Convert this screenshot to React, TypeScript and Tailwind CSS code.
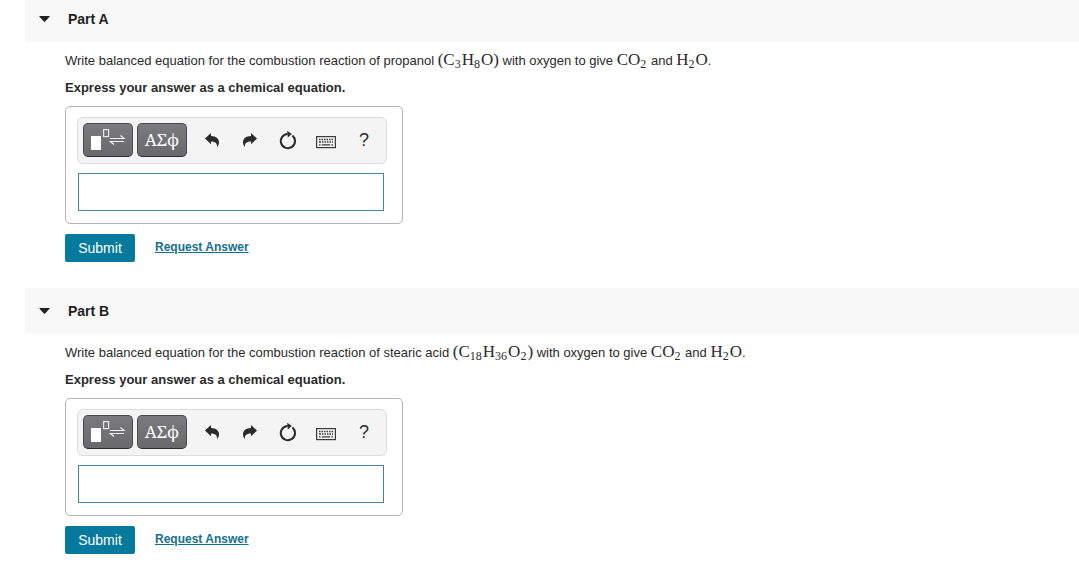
import * as React from "react";

type Piece = string | { formula: string };

type PartItem = {
  id: string;
  title: string;
  question: Piece[];
};

const PARTS: PartItem[] = [
  {
    id: "a",
    title: "Part A",
    question: [
      "Write balanced equation for the combustion reaction of propanol ",
      { formula: "(C3H8O)" },
      " with oxygen to give ",
      { formula: "CO2" },
      " and ",
      { formula: "H2O" },
      ".",
    ],
  },
  {
    id: "b",
    title: "Part B",
    question: [
      "Write balanced equation for the combustion reaction of stearic acid ",
      { formula: "(C18H36O2)" },
      " with oxygen to give ",
      { formula: "CO2" },
      " and ",
      { formula: "H2O" },
      ".",
    ],
  },
];

// Digits become subscripts, everything else stays on the line
function Formula({ value }: { value: string }) {
  return (
    <span className="font-['Liberation_Serif',serif] text-[17px] leading-none">
      {value.split(/(\d+)/).map((chunk, idx) =>
        /^\d+$/.test(chunk) ? (
          <sub key={idx} className="bottom-0 mr-px align-[-3px] text-[12px] leading-none">
            {chunk}
          </sub>
        ) : (
          <React.Fragment key={idx}>{chunk}</React.Fragment>
        )
      )}
    </span>
  );
}

function TemplatesIcon() {
  return (
    <svg width="36" height="24" viewBox="0 0 36 24" fill="none" aria-hidden="true">
      <rect x="1" y="8" width="10" height="14" fill="#fff" />
      <rect x="13.6" y="1.6" width="5" height="7" stroke="#e8e8ea" strokeWidth="1.2" />
      <path d="M20 10.5h14l-3.6-3M34 13.5H20.4l3.6 3" stroke="#f1f1f2" strokeWidth="1.2" />
    </svg>
  );
}

function UndoIcon() {
  return (
    <svg width="14" height="14" viewBox="0 0 14 14" fill="#2b2b2b" aria-hidden="true">
      <path d="M0 5.6 6 0v3c5 .1 8 2.6 8 6.4 0 1.8-.7 3.3-2 4.6.5-3.8-1.5-5.5-6-5.6v2.8z" />
    </svg>
  );
}

function RedoIcon() {
  return (
    <svg width="14" height="14" viewBox="0 0 14 14" fill="#2b2b2b" aria-hidden="true">
      <path d="M14 5.6 8 0v3C3 3.1 0 5.6 0 9.4c0 1.8.7 3.3 2 4.6-.5-3.8 1.5-5.5 6-5.6v2.8z" />
    </svg>
  );
}

function ResetIcon() {
  return (
    <svg width="18" height="20" viewBox="0 0 18 20" aria-hidden="true">
      <path
        d="M13.4 5.6A7.1 7.1 0 1 1 8.6 4"
        fill="none"
        stroke="#2b2b2b"
        strokeWidth="2"
      />
      <path d="M8.2 .8 12.8 4 8.8 7.4z" fill="#2b2b2b" />
    </svg>
  );
}

function KeyboardIcon() {
  return (
    <svg width="20" height="14" viewBox="0 0 20 14" fill="none" aria-hidden="true">
      <rect x=".6" y="1.6" width="18.8" height="11" stroke="#3a3a3a" strokeWidth="1.2" />
      <path
        d="M3 4.5h1.5m1 0H7m1 0h1.5m1 0H12m1 0h1.5m1 0H17M3 7h2m1 0h1.5m1 0H10m1 0h1.5m1 0H15m1 0h1"
        stroke="#3a3a3a"
        strokeWidth="1.3"
      />
      <path d="M3 9.8h1.6m1.2 0h8.4m1.2 0H17" stroke="#3a3a3a" strokeWidth="1.3" />
    </svg>
  );
}

const DARK_BUTTON =
  "flex h-[34px] w-[50px] shrink-0 items-center justify-center rounded-[5px] border border-[#4a4a4c] border-b-[#2c2c2e] bg-linear-to-b from-[#7b7b7e] to-[#69696d] text-white";

const TOOL_BUTTON = "flex h-[34px] w-[38px] shrink-0 items-center justify-center";

function Toolbar() {
  return (
    <div
      role="toolbar"
      aria-label="Equation tools"
      className="mr-1 flex h-[47px] items-center rounded-md border border-[#dcdcdc] bg-[#f4f4f4] pb-px pl-[5px]"
    >
      <button type="button" aria-label="Templates" className={DARK_BUTTON}>
        <TemplatesIcon />
      </button>
      <button
        type="button"
        aria-label="Greek symbols"
        className={`${DARK_BUTTON} ml-1 mr-[6px] font-['Noto_Serif','DejaVu_Serif','Liberation_Serif',serif] text-[17px]`}
      >
        ΑΣϕ
      </button>
      <button type="button" aria-label="Undo" className={TOOL_BUTTON}>
        <UndoIcon />
      </button>
      <button type="button" aria-label="Redo" className={TOOL_BUTTON}>
        <RedoIcon />
      </button>
      <button type="button" aria-label="Reset" className={TOOL_BUTTON}>
        <ResetIcon />
      </button>
      <button type="button" aria-label="Keyboard shortcuts" className={`${TOOL_BUTTON} pt-1`}>
        <KeyboardIcon />
      </button>
      <button type="button" aria-label="Help" className={`${TOOL_BUTTON} text-[18px] text-[#2b2b2b]`}>
        ?
      </button>
    </div>
  );
}

function Part({ item }: { item: PartItem }) {
  const [open, setOpen] = React.useState(true);
  const [answer, setAnswer] = React.useState("");

  return (
    <section className="group">
      <h2 className="bg-[#f8f8f8] py-3 group-first:pt-2">
        <button
          type="button"
          aria-expanded={open}
          onClick={() => setOpen(!open)}
          className="flex items-center gap-[18px] pl-[14px] text-[14px] leading-[22px] font-bold text-[#1f1f1f]"
        >
          <svg width="11" height="6" viewBox="0 0 11 6" fill="#1f1f1f" aria-hidden="true">
            <path d="M.8 0h9.4q.8 0 .3.7L6.1 5.6q-.6.6-1.2 0L.5.7Q0 0 .8 0z" />
          </svg>
          {item.title}
        </button>
      </h2>

      {open && (
        <div className="pt-[5px] pr-4 pb-[26px] pl-10">
          <p className="text-[13px] leading-[27px]">
            {item.question.map((piece, idx) =>
              typeof piece === "string" ? (
                <React.Fragment key={idx}>{piece}</React.Fragment>
              ) : (
                <Formula key={idx} value={piece.formula} />
              )
            )}
          </p>
          <label htmlFor={`answer-${item.id}`} className="block text-[13px] leading-[27px] font-bold">
            Express your answer as a chemical equation.
          </label>

          <div className="mt-[5px] max-w-[338px] rounded-[5px] border border-[#b4b4b4] px-[11px] pt-[10px] pb-3">
            <Toolbar />
            <input
              id={`answer-${item.id}`}
              type="text"
              value={answer}
              onChange={(e) => setAnswer(e.target.value)}
              className="mt-[9px] ml-px block h-[38px] w-[306px] max-w-full border border-[#4288a5] bg-white px-2 text-[16px] outline-none"
            />
          </div>

          <div className="mt-[10px] flex items-center gap-5">
            <button
              type="button"
              className="h-7 w-[70px] rounded-[2px] bg-[#057a9c] text-[14px] text-white"
            >
              Submit
            </button>
            <a href="#" className="pb-0.5 text-[12px] font-bold text-[#14708f] underline">
              Request Answer
            </a>
          </div>
        </div>
      )}
    </section>
  );
}

export default function App() {
  return (
    <main className="bg-white pl-[25px] font-['Liberation_Sans',Arial,sans-serif] text-[#2a2a2a]">
      {PARTS.map((item) => (
        <Part key={item.id} item={item} />
      ))}
    </main>
  );
}
